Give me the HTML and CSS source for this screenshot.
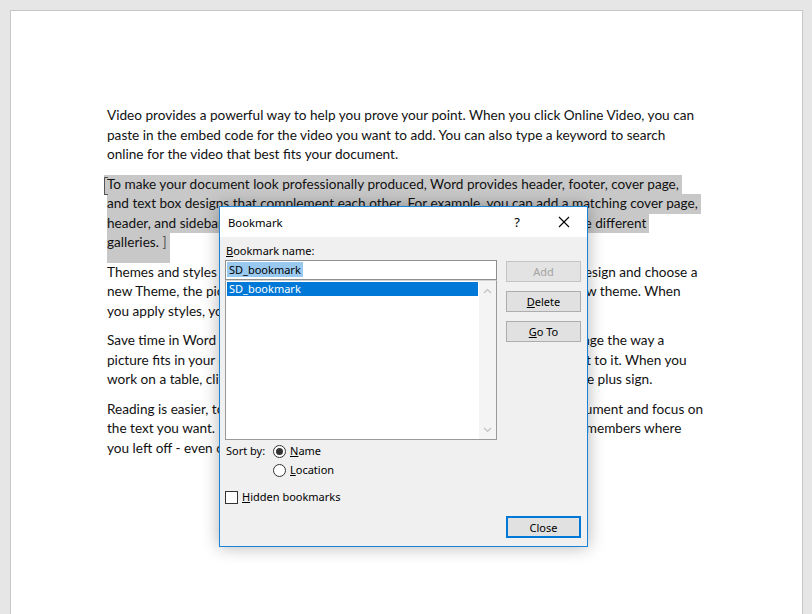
FILE: index.html
```html
<!DOCTYPE html>
<html lang="en">
<head>
    <meta charset="UTF-8">
    <title>Document - Bookmark</title>
    <link rel="stylesheet" href="styles.css">
</head>
<body>
    <div class="page">
        <div class="para">
            <div class="ln">Video provides a powerful way to help you prove your point. When you click Online Video, you can</div>
            <div class="ln">paste in the embed code for the video you want to add. You can also type a keyword to search</div>
            <div class="ln">online for the video that best fits your document.</div>
        </div>
        <div class="para sel">
            <div class="ln first">To make your document look professionally produced, Word provides header, footer, cover page,</div>
            <div class="ln">and text box designs that complement each other. For example, you can add a matching cover page,</div>
            <div class="ln">header, and sidebar. Click Insert and then choose the elements you want from the different</div>
            <div class="ln last">galleries. <span class="bracket">]</span></div>
        </div>
        <div class="para">
            <div class="ln">Themes and styles also help keep your document coordinated. When you click Design and choose a</div>
            <div class="ln">new Theme, the pictures, charts, and SmartArt graphics change to match your new theme. When</div>
            <div class="ln">you apply styles, your headings change to match the new theme.</div>
        </div>
        <div class="para">
            <div class="ln">Save time in Word with new buttons that show up where you need them. To change the way a</div>
            <div class="ln">picture fits in your document, click it and a button for layout options appears next to it. When you</div>
            <div class="ln">work on a table, click where you want to add a row or a column, and then click the plus sign.</div>
        </div>
        <div class="para">
            <div class="ln">Reading is easier, too, in the new Reading view. You can collapse parts of the document and focus on</div>
            <div class="ln">the text you want. If you need to stop reading before you reach the end, Word remembers where</div>
            <div class="ln">you left off - even on another device.</div>
        </div>
    </div>

    <div class="dialog">
        <div class="titlebar">
            <span class="title">Bookmark</span>
            <span class="help">?</span>
            <svg class="close-x" width="12" height="12" viewBox="0 0 12 12">
                <path d="M1 1 L11 11 M11 1 L1 11" stroke="#000" stroke-width="1.1" fill="none"/>
            </svg>
        </div>
        <div class="dialog-body">
            <div class="left-col">
                <label class="field-label"><u>B</u>ookmark name:</label>
                <div class="name-input"><span class="selected-text">SD_bookmark</span></div>
                <div class="list">
                    <div class="list-items">
                        <div class="list-item active">SD_bookmark</div>
                    </div>
                    <div class="scrollbar">
                        <svg width="9" height="6" viewBox="0 0 9 6"><path d="M1 5 L4.5 1.5 L8 5" stroke="#c2c2c2" stroke-width="1.2" fill="none"/></svg>
                        <svg width="9" height="6" viewBox="0 0 9 6"><path d="M1 1 L4.5 4.5 L8 1" stroke="#c2c2c2" stroke-width="1.2" fill="none"/></svg>
                    </div>
                </div>
                <div class="sort">
                    <span class="sort-label">Sort by:</span>
                    <div class="radios">
                        <div class="option"><span class="radio checked"></span><span><u>N</u>ame</span></div>
                        <div class="option"><span class="radio"></span><span><u>L</u>ocation</span></div>
                    </div>
                </div>
                <div class="option hidden-opt"><span class="checkbox"></span><span><u>H</u>idden bookmarks</span></div>
            </div>
            <div class="right-col">
                <button class="btn" disabled>Add</button>
                <button class="btn"><u>D</u>elete</button>
                <button class="btn"><u>G</u>o To</button>
                <button class="btn default">Close</button>
            </div>
        </div>
    </div>
</body>
</html>
```

FILE: styles.css
```css
* {
    margin: 0;
    padding: 0;
    box-sizing: border-box;
}

body {
    background-color: #e6e6e6;
    height: 614px;
    overflow: hidden;
    padding: 10px 9px 0 10px;
}

/* Document page */
.page {
    background-color: #ffffff;
    border: 1px solid #c6c6c6;
    border-bottom: none;
    height: 700px;
    padding: 95px 0 0 96px;
    font-family: Lato, 'Open Sans', sans-serif;
    font-size: 13.6px;
    color: #111111;
}

.para {
    margin-bottom: 10px;
}

.ln {
    height: 19.5px;
    line-height: 19.5px;
    white-space: nowrap;
}

.sel {
    margin-bottom: 0;
}

.sel .ln {
    width: fit-content;
    background-color: #c8c8c8;
    padding-right: 3px;
}

.sel .ln.first {
    position: relative;
    margin-left: -3px;
    padding-left: 3px;
}

.sel .ln.first::before {
    content: '';
    position: absolute;
    left: 0;
    top: 2px;
    width: 3px;
    height: 16px;
    border: 1px solid #555555;
    border-right: none;
}

.sel .ln.last {
    height: 29.5px;
}

.bracket {
    color: #555555;
}

/* Bookmark dialog */
.dialog {
    position: absolute;
    left: 219px;
    top: 206px;
    width: 369px;
    height: 341px;
    border: 1px solid #1883d7;
    background-color: #f0f0f0;
    box-shadow: 0 0 16px rgba(0, 0, 0, 0.3);
    display: flex;
    flex-direction: column;
    font-family: 'Noto Sans', 'Open Sans', sans-serif;
    font-size: 11px;
    color: #000000;
}

.titlebar {
    height: 30px;
    background-color: #ffffff;
    display: flex;
    align-items: center;
    padding-left: 8px;
}

.title {
    font-size: 11.3px;
    flex: 1;
}

.help {
    font-size: 13px;
    margin-right: 38px;
}

.close-x {
    margin-right: 17px;
}

.dialog-body {
    flex: 1;
    display: grid;
    grid-template-columns: 272px 75px;
    column-gap: 9px;
    padding: 6px 6px 8px 5px;
}

.left-col {
    display: flex;
    flex-direction: column;
}

.field-label {
    height: 15px;
    line-height: 15px;
    margin: 0 0 2px 1px;
}

.name-input {
    height: 20px;
    border: 1px solid #8f8f8f;
    background-color: #ffffff;
    padding: 1px 0 0 1px;
}

.selected-text {
    display: inline-block;
    background-color: #99c9ef;
    height: 15px;
    line-height: 15px;
    padding: 0 2px;
}

.list {
    height: 160px;
    border: 1px solid #9a9a9a;
    border-top-color: #d4d4d4;
    background-color: #ffffff;
    display: flex;
    padding: 1px 0 0 1px;
}

.list-items {
    width: 251px;
    margin-right: 1px;
}

.list-item {
    height: 14px;
    line-height: 14px;
    padding-left: 2px;
}

.list-item.active {
    background-color: #0078d7;
    color: #ffffff;
}

.scrollbar {
    width: 17px;
    margin-top: -1px;
    background-color: #f4f4f4;
    display: flex;
    flex-direction: column;
    justify-content: space-between;
    align-items: center;
    padding: 7px 0 6px;
}

.sort {
    display: flex;
    margin-top: 4px;
}

.sort-label {
    width: 48px;
    padding-left: 1px;
    line-height: 14px;
}

.radios {
    display: flex;
    flex-direction: column;
    gap: 5px;
}

.option {
    display: flex;
    align-items: center;
    gap: 4px;
    height: 14px;
    line-height: 14px;
}

.radio {
    width: 13px;
    height: 13px;
    border: 1px solid #333333;
    border-radius: 50%;
    background-color: #ffffff;
    display: flex;
    align-items: center;
    justify-content: center;
}

.radio.checked::after {
    content: '';
    width: 7px;
    height: 7px;
    border-radius: 50%;
    background-color: #333333;
}

.hidden-opt {
    margin-top: 13px;
}

.checkbox {
    width: 13px;
    height: 13px;
    border: 1px solid #333333;
    background-color: #ffffff;
}

.right-col {
    display: flex;
    flex-direction: column;
    gap: 9px;
    padding-top: 18px;
}

.btn {
    height: 21px;
    border: 1px solid #adadad;
    background-color: #e1e1e1;
    font-family: inherit;
    font-size: 11px;
    color: #000000;
}

.btn:disabled {
    border-color: #c4c4c4;
    background-color: #e3e3e3;
    color: #a3a3a3;
}

.btn.default {
    margin-top: auto;
    height: 22px;
    border: 2px solid #0078d7;
}
```
